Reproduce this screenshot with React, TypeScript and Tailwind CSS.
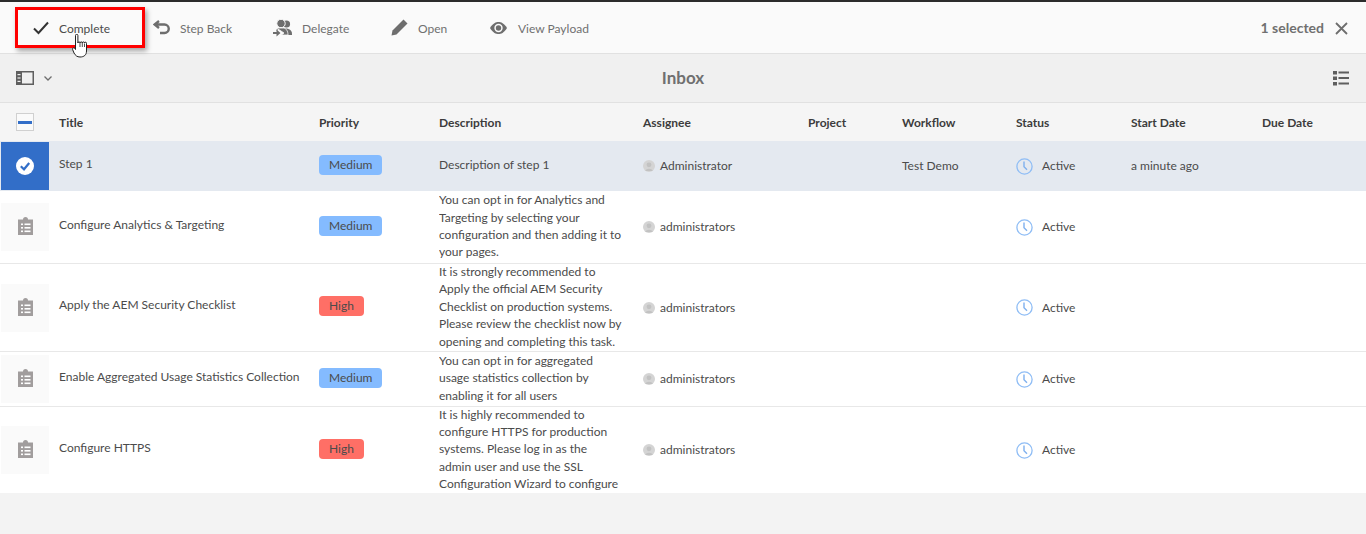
import React from "react";

const grid = "grid grid-cols-[59px_260px_120px_204px_165px_94px_114px_115px_131px_103px] items-center";

function Clipboard() {
  return (
    <svg width="15" height="18" viewBox="0 0 15 18">
      <path d="M5 2.5 a2.5 2.5 0 0 1 5 0 h5 V18 H0 V2.5 Z" fill="#a19d9d" />
      <rect x="3" y="6.5" width="2" height="1.6" fill="#fff" />
      <rect x="6.5" y="6.5" width="6" height="1.6" fill="#fff" />
      <rect x="3" y="10" width="2" height="1.6" fill="#fff" />
      <rect x="6.5" y="10" width="6" height="1.6" fill="#fff" />
      <rect x="3" y="13.5" width="2" height="1.6" fill="#fff" />
      <rect x="6.5" y="13.5" width="6" height="1.6" fill="#fff" />
    </svg>
  );
}

function Clock() {
  return (
    <svg width="17" height="17" viewBox="0 0 17 17" fill="none" stroke="#8fbdf5" strokeWidth="1.3">
      <circle cx="8.5" cy="8.5" r="7.6" />
      <path d="M8 3.5 V8.8 L11 11.8" stroke="#7fb0ee" strokeWidth="1.4" />
    </svg>
  );
}

function Avatar() {
  return (
    <svg width="12" height="12" viewBox="0 0 12 12" className="shrink-0">
      <circle cx="6" cy="6" r="6" fill="#d4d4d4" />
      <circle cx="6" cy="4.8" r="2.4" fill="#c2c2c2" />
      <path d="M2.4 11 C3 8 9 8 9.6 11 Z" fill="#c2c2c2" />
    </svg>
  );
}

type Row = {
  title: string;
  priority: "Medium" | "High";
  desc: string[];
  assignee: string;
  h: string;
  clip: string;
  border: boolean;
  selected?: boolean;
  workflow?: string;
  start?: string;
};

const rows: Row[] = [
  {
    title: "Step 1",
    priority: "Medium",
    desc: ["Description of step 1"],
    assignee: "Administrator",
    h: "h-[50px]",
    clip: "max-h-[18px]",
    border: false,
    selected: true,
    workflow: "Test Demo",
    start: "a minute ago",
  },
  {
    title: "Configure Analytics & Targeting",
    priority: "Medium",
    desc: [
      "You can opt in for Analytics and",
      "Targeting by selecting your",
      "configuration and then adding it to",
      "your pages.",
    ],
    assignee: "administrators",
    h: "h-[73px]",
    clip: "max-h-[70px]",
    border: true,
  },
  {
    title: "Apply the AEM Security Checklist",
    priority: "High",
    desc: [
      "It is strongly recommended to",
      "Apply the official AEM Security",
      "Checklist on production systems.",
      "Please review the checklist now by",
      "opening and completing this task.",
    ],
    assignee: "administrators",
    h: "h-[88px]",
    clip: "max-h-[87px]",
    border: true,
  },
  {
    title: "Enable Aggregated Usage Statistics Collection",
    priority: "Medium",
    desc: [
      "You can opt in for aggregated",
      "usage statistics collection by",
      "enabling it for all users",
    ],
    assignee: "administrators",
    h: "h-[55px]",
    clip: "max-h-[53px]",
    border: true,
  },
  {
    title: "Configure HTTPS",
    priority: "High",
    desc: [
      "It is highly recommended to",
      "configure HTTPS for production",
      "systems. Please log in as the",
      "admin user and use the SSL",
      "Configuration Wizard to configure",
    ],
    assignee: "administrators",
    h: "h-[86px]",
    clip: "max-h-[87px]",
    border: false,
  },
];

export default function App() {
  return (
    <div className="relative h-[534px] w-[1366px] overflow-hidden bg-[#f3f3f3] font-['Lato',sans-serif] text-[12px] text-[#4b4b4b]">
      <div className="h-[2px] bg-[#2c2c2c]" />

      <div className="flex h-[52px] items-center border-b border-[#e1e1e1] bg-[#fafafa] text-[#707070]">
        <svg width="16" height="14" viewBox="0 0 16 14" fill="none" stroke="#333" strokeWidth="2" className="ml-[33px]">
          <path d="M1 7.5 L5.5 12 L15 1.5" />
        </svg>
        <span className="ml-[10px] w-[94px] pt-[3px] text-[#4b4b4b]">Complete</span>
        <svg width="17" height="15" viewBox="0 0 17 15" fill="none" stroke="#6e6e6e" strokeWidth="2.4">
          <path d="M6 1 L1.5 4.5 L6 8 M2 4.5 H11.5 a4 4 0 0 1 0 8.5 H7" />
        </svg>
        <span className="ml-[10px] w-[93px] pt-[3px]">Step Back</span>
        <svg width="19" height="18" viewBox="0 0 19 18" fill="#6e6e6e">
          <circle cx="13.5" cy="5" r="3.6" />
          <path d="M12 9.5 C16 9.5 19 11 19 15 L19 16 H13 Z" />
          <circle cx="8" cy="4.5" r="4.2" stroke="#fafafa" strokeWidth="1" />
          <path d="M5 9 C3.5 10 3 11 3 12 H5 V10 L11 14 L8.5 16 H15 C15 12 13 9 10.5 9 Z" stroke="#fafafa" strokeWidth="0.8" />
          <path d="M0 13 H3.5 V10.5 L7.5 14 L3.5 17.5 V15 H0 Z" />
        </svg>
        <span className="ml-[10px] w-[89px] pt-[3px]">Delegate</span>
        <svg width="17" height="17" viewBox="0 0 17 17" fill="#6e6e6e">
          <path d="M12.5 0.5 L16.5 4.5 L5.5 15.5 L0.5 16.5 L1.5 11.5 Z" />
        </svg>
        <span className="ml-[10px] w-[72px] pt-[3px]">Open</span>
        <svg width="17" height="12" viewBox="0 0 17 12">
          <path d="M0 6 C3 1 6 0 8.5 0 C11 0 14 1 17 6 C14 11 11 12 8.5 12 C6 12 3 11 0 6 Z" fill="#6e6e6e" />
          <circle cx="8.5" cy="6" r="4.2" fill="#fafafa" />
          <circle cx="8.5" cy="6" r="2.7" fill="#6e6e6e" />
        </svg>
        <span className="ml-[11px] pt-[3px]">View Payload</span>
        <span className="ml-auto text-[14px] font-bold">1 selected</span>
        <svg width="13" height="13" viewBox="0 0 13 13" fill="none" stroke="#6e6e6e" strokeWidth="1.8" className="ml-[11px] mr-[18px] mt-[2px]">
          <path d="M1 1 L12 12 M12 1 L1 12" />
        </svg>
      </div>

      <div className="relative flex h-[49px] items-center justify-center border-b border-[#e1e1e1] bg-[#f0f0f0]">
        <span className="text-[17px] font-bold text-[#707070]">Inbox</span>
        <div className="absolute left-[16px] top-[17px] flex items-center gap-[10px]">
          <svg width="18" height="14" viewBox="0 0 18 14">
            <rect x="0.75" y="0.75" width="16.5" height="12.5" fill="none" stroke="#5f5f5f" strokeWidth="1.5" />
            <rect x="0" y="0" width="6" height="14" fill="#5f5f5f" />
            <rect x="1.5" y="3" width="3" height="1.2" fill="#f0f0f0" />
            <rect x="1.5" y="6.4" width="3" height="1.2" fill="#f0f0f0" />
            <rect x="1.5" y="9.8" width="3" height="1.2" fill="#f0f0f0" />
          </svg>
          <svg width="8" height="5" viewBox="0 0 8 5" fill="none" stroke="#6e6e6e" strokeWidth="1.3">
            <path d="M0.5 0.5 L4 4 L7.5 0.5" />
          </svg>
        </div>
        <svg width="16" height="15" viewBox="0 0 16 15" fill="#5f5f5f" className="absolute right-[17px] top-[17px]">
          <rect x="0" y="0" width="4" height="3.5" />
          <rect x="5.5" y="0.5" width="10.5" height="2" />
          <rect x="0" y="5.5" width="4" height="3.5" />
          <rect x="5.5" y="6" width="10.5" height="2" />
          <rect x="0" y="11" width="4" height="3.5" />
          <rect x="5.5" y="11.5" width="10.5" height="2" />
        </svg>
      </div>

      <div className={`${grid} h-[38px] bg-[#f5f5f5] font-bold text-[#3c3c3c]`}>
        <div className="pl-[16px]">
          <div className="flex h-[18px] w-[18px] items-center justify-center border border-[#d0d0d0] bg-[#fafafa]">
            <div className="h-[3px] w-[14px] bg-[#326ec8]" />
          </div>
        </div>
        <div className="pt-[2px]">Title</div>
        <div className="pt-[2px]">Priority</div>
        <div className="pt-[2px]">Description</div>
        <div className="pt-[2px]">Assignee</div>
        <div className="pt-[2px]">Project</div>
        <div className="pt-[2px]">Workflow</div>
        <div className="pt-[2px]">Status</div>
        <div className="pt-[2px]">Start Date</div>
        <div className="pt-[2px]">Due Date</div>
      </div>

      <div className="border-l border-[#e8e8e8]">
        {rows.map((r) => (
          <div
            key={r.title}
            className={`${grid} -ml-px ${r.h} ${r.selected ? "bg-[#e4e9f0]" : "bg-white"} ${r.border ? "border-b border-[#e8e8e8]" : ""}`}
          >
            <div className={`ml-px flex h-[48px] w-[48px] items-center justify-center ${r.selected ? "bg-[#326ec8]" : "bg-[#fafafa]"}`}>
              {r.selected ? (
                <svg width="18" height="18" viewBox="0 0 18 18">
                  <circle cx="9" cy="9" r="9" fill="#fff" />
                  <path d="M4.8 9.3 L8 12.3 L13.2 6" fill="none" stroke="#326ec8" strokeWidth="2.2" />
                </svg>
              ) : (
                <div className="-mt-[2px]">
                  <Clipboard />
                </div>
              )}
            </div>
            <div className="-mt-[5px]">{r.title}</div>
            <div className="-mt-[3px]">
              <span className={`inline-block rounded-[4px] px-[10px] py-[2px] leading-[16px] ${r.priority === "High" ? "bg-[#ff6f66]" : "bg-[#84bbff]"}`}>
                {r.priority}
              </span>
            </div>
            <div className={`-mt-[2px] overflow-hidden leading-[17.4px] ${r.clip}`}>
              {r.desc.map((l) => (
                <div key={l} className="whitespace-nowrap">{l}</div>
              ))}
            </div>
            <div className="flex items-center gap-[5px]">
              <Avatar />
              <span>{r.assignee}</span>
            </div>
            <div />
            <div>{r.workflow}</div>
            <div className="flex items-center gap-[9px]">
              <Clock />
              <span>Active</span>
            </div>
            <div>{r.start}</div>
            <div />
          </div>
        ))}
      </div>

      <div className="absolute left-[15px] top-[7px] h-[41px] w-[130px] border-[3px] border-[#f00] shadow-[2px_3px_5px_rgba(0,0,0,0.35)]" />
      <svg width="17" height="24" viewBox="0 0 17 24" className="absolute left-[72px] top-[34px]">
        <path
          d="M3.5 1.5 a1.2 1.2 0 0 1 2.4 0 V9 a1.1 1.1 0 0 1 2.2 0 a1.1 1.1 0 0 1 2.2 0 a1.1 1.1 0 0 1 2.2 0 a1 1 0 0 1 2 0.5 V17 C14.5 21 12 23 8 23 C5 23 3.5 21.5 2 19 L0.6 15.5 C0 14 2 13 3 14.5 L3.5 15.5 Z"
          fill="#fff"
          stroke="#222"
          strokeWidth="1"
        />
        <path d="M8 9 V13 M10.3 9 V13 M12.5 9.5 V13" stroke="#222" strokeWidth="0.8" fill="none" />
      </svg>
    </div>
  );
}
